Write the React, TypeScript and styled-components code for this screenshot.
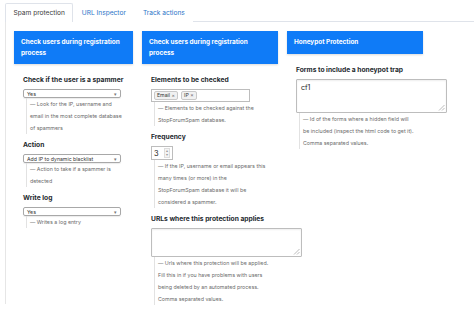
import styled, { createGlobalStyle } from "styled-components";

const GlobalStyle = createGlobalStyle`
  body {
    margin: 0;
    background: #fff;
    font-family: Inter, "Noto Sans", sans-serif;
    color: #23282d;
  }
`;

type Field = {
  label: string;
  control: React.ReactNode;
  desc: string[];
};

function Select({ value }: { value: string }) {
  return (
    <ScSelect>
      <span>{value}</span>
      <ScCaret>▾</ScCaret>
    </ScSelect>
  );
}

function Resizer() {
  return (
    <ScGrip width="7" height="7" viewBox="0 0 7 7">
      <path d="M6.5 1 L1 6.5 M6.5 4 L4 6.5" stroke="#aaa" strokeWidth="0.8" />
    </ScGrip>
  );
}

function TextArea({ value, width, height }: { value?: string; width: number; height: number }) {
  return (
    <ScTextArea $w={width} $h={height}>
      {value}
      <Resizer />
    </ScTextArea>
  );
}

function TagInput() {
  return (
    <ScTagBox>
      <ScTag>
        Email <b>×</b>
      </ScTag>
      <ScTag>
        IP <b>×</b>
      </ScTag>
    </ScTagBox>
  );
}

function NumberInput({ value }: { value: number }) {
  return (
    <ScNumber>
      <span>{value}</span>
      <ScSpin>
        <i>▴</i>
        <i>▾</i>
      </ScSpin>
    </ScNumber>
  );
}

const columns: { title: string; width: number; fields: Field[] }[] = [
  {
    title: "Check users during registration process",
    width: 119,
    fields: [
      {
        label: "Check if the user is a spammer",
        control: <Select value="Yes" />,
        desc: ["— Look for the IP, username and", "email in the most complete database", "of spammers"],
      },
      {
        label: "Action",
        control: <Select value="Add IP to dynamic blacklist" />,
        desc: ["— Action to take if a spammer is", "detected"],
      },
      {
        label: "Write log",
        control: <Select value="Yes" />,
        desc: ["— Writes a log entry"],
      },
    ],
  },
  {
    title: "Check users during registration process",
    width: 136,
    fields: [
      {
        label: "Elements to be checked",
        control: <TagInput />,
        desc: ["— Elements to be checked against the", "StopForumSpam database."],
      },
      {
        label: "Frequency",
        control: <NumberInput value={3} />,
        desc: [
          "— If the IP, username or email appears this",
          "many times (or more) in the",
          "StopForumSpam database it will be",
          "considered a spammer.",
        ],
      },
      {
        label: "URLs where this protection applies",
        control: <TextArea width={151} height={29} />,
        desc: [
          "— Urls where this protection will be applied.",
          "Fill this in if you have problems with users",
          "being deleted by an automated process.",
          "Comma separated values.",
        ],
      },
    ],
  },
  {
    title: "Honeypot Protection",
    width: 136,
    fields: [
      {
        label: "Forms to include a honeypot trap",
        control: <TextArea value="cf1" width={151} height={34} />,
        desc: [
          "— Id of the forms where a hidden field will",
          "be included (inspect the html code to get it).",
          "Comma separated values.",
        ],
      },
    ],
  },
];

const tabs = ["Spam protection", "URL Inspector", "Track actions"];

function App() {
  return (
    <ScPage>
      <GlobalStyle />
      <ScTabs>
        {tabs.map((t, i) => (
          <ScTab key={t} $active={i === 0}>
            {t}
          </ScTab>
        ))}
      </ScTabs>
      <ScPanel>
        {columns.map((col, ci) => (
          <ScColumn key={ci} $w={col.width}>
            <ScHeader>{col.title}</ScHeader>
            <ScFields>
              {col.fields.map((f) => (
                <ScField key={f.label}>
                  <ScLabel>{f.label}</ScLabel>
                  {f.control}
                  <ScDesc>
                    {f.desc.map((d) => (
                      <div key={d}>{d}</div>
                    ))}
                  </ScDesc>
                </ScField>
              ))}
            </ScFields>
          </ScColumn>
        ))}
      </ScPanel>
    </ScPage>
  );
}

const ScPage = styled.div`
  padding: 3px 0 0 5px;
  width: 474px;
  height: 312px;
  box-sizing: border-box;
  overflow: hidden;
`;
const ScTabs = styled.div`
  display: flex;
  border-bottom: 1px solid #dfe3ea;
  height: 18px;
`;
const ScTab = styled.div<{ $active: boolean }>`
  box-sizing: border-box;
  padding: 0 7.5px;
  display: flex;
  align-items: center;
  font-size: 6.6px;
  color: ${(p) => (p.$active ? "#3a3a3a" : "#2b74c7")};
  background: #fff;
  border: 1px solid ${(p) => (p.$active ? "#dfe3ea" : "transparent")};
  border-bottom: none;
  border-radius: 2px 2px 0 0;
  margin-bottom: -1px;
  height: 19px;
`;
const ScPanel = styled.div`
  display: flex;
  align-items: flex-start;
  gap: 9px;
  padding: 9px 0 0 8px;
  border-left: 1px solid #e6e6e6;
  height: 282px;
  box-sizing: border-box;
`;
const ScColumn = styled.div<{ $w: number }>`
  width: ${(p) => p.$w}px;
  flex-shrink: 0;
`;
const ScHeader = styled.div`
  background: #0f7bf7;
  color: #fff;
  font-weight: 700;
  font-size: 6.4px;
  line-height: 10.5px;
  padding: 6px 9px 6px 7px;
  box-sizing: border-box;
  min-height: 23px;
  box-shadow: 0 1px 2px rgba(0, 0, 0, 0.15);
`;
const ScFields = styled.div`
  padding: 11px 0 0 9px;
  display: flex;
  flex-direction: column;
  gap: 6px;
`;
const ScField = styled.div`
  display: flex;
  flex-direction: column;
  align-items: flex-start;
`;
const ScLabel = styled.div`
  font-weight: 700;
  font-size: 6.7px;
  line-height: 11px;
  color: #23282d;
  margin-bottom: 3px;
  white-space: nowrap;
`;
const ScSelect = styled.div`
  width: 98px;
  height: 9px;
  box-sizing: border-box;
  border: 1px solid #a8a8a8;
  border-radius: 2px;
  display: flex;
  align-items: center;
  justify-content: space-between;
  padding: 0 3px;
  font-size: 5.2px;
  color: #333;
  box-shadow: 0 1px 1px rgba(0, 0, 0, 0.08);
`;
const ScCaret = styled.span`
  font-size: 5px;
  color: #777;
`;
const ScDesc = styled.div`
  margin-left: 3px;
  padding: 0 0 0 3px;
  border-left: 1px solid #e2e2e2;
  font-size: 5.3px;
  line-height: 12px;
  color: #6b6b6b;
  white-space: nowrap;
`;
const ScTextArea = styled.div<{ $w: number; $h: number }>`
  position: relative;
  width: ${(p) => p.$w}px;
  height: ${(p) => p.$h}px;
  box-sizing: border-box;
  border: 1px solid #bdbdbd;
  border-radius: 1px;
  padding: 3px 4px;
  font-size: 7px;
  color: #222;
  box-shadow: inset 0 1px 2px rgba(0, 0, 0, 0.07);
`;
const ScGrip = styled.svg`
  position: absolute;
  right: 1px;
  bottom: 1px;
`;
const ScTagBox = styled.div`
  width: 99px;
  height: 13px;
  box-sizing: border-box;
  border: 1px solid #bdbdbd;
  display: flex;
  align-items: center;
  gap: 3px;
  padding: 0 2px;
`;
const ScTag = styled.span`
  font-size: 5.2px;
  color: #333;
  border: 1px solid #c9c9c9;
  background: #f1f1f1;
  border-radius: 2px;
  padding: 0 2px;
  line-height: 7px;
  b {
    font-weight: 400;
    color: #666;
  }
`;
const ScNumber = styled.div`
  width: 22px;
  height: 14px;
  box-sizing: border-box;
  border: 1px solid #bdbdbd;
  display: flex;
  align-items: center;
  justify-content: space-between;
  padding: 0 2px;
  font-size: 7.5px;
  color: #222;
`;
const ScSpin = styled.span`
  display: flex;
  flex-direction: column;
  border: 1px solid #ddd;
  background: #f4f4f4;
  i {
    font-style: normal;
    font-size: 3.5px;
    line-height: 4px;
    color: #999;
    padding: 0 1px;
  }
`;

export default App;
